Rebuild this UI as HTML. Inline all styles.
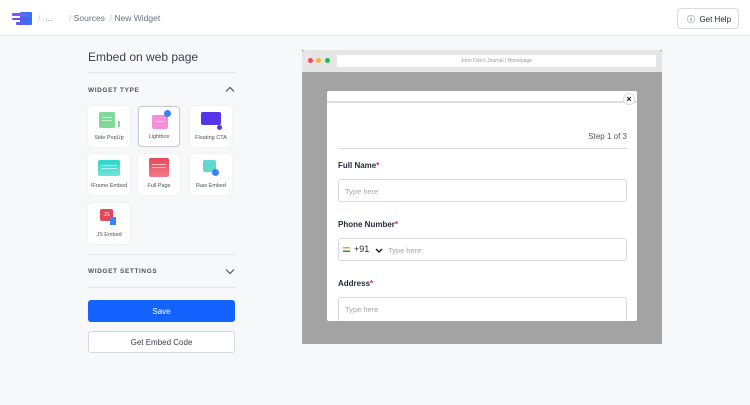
<!DOCTYPE html>
<html><head><style>
*{box-sizing:border-box;margin:0;padding:0}
body{width:750px;height:405px;background:#f7f8fa;font-family:"Liberation Sans",sans-serif;position:relative;overflow:hidden;color:#374151}
.a{position:absolute}
.hdr{left:0;top:0;width:750px;height:36px;background:#fff;border-bottom:1px solid #e8e9ec}
.bc{font-size:8.5px;color:#6b7280;top:13px}
.sl{color:#c4c7cc}
.card{width:42px;height:41px;background:#fff;border-radius:4px;box-shadow:0 0 2px rgba(0,0,0,.08);font-size:5.5px;color:#4b5563;text-align:center}
.card span{position:absolute;left:0;right:0;bottom:6px}
.ic{position:absolute;left:13px;top:6px;width:16px;height:16px;border-radius:2px}
.ic i{position:absolute;left:3px;right:3px;height:1px;background:rgba(255,255,255,.6)}
.hr{height:1px;background:#e3e5e8;left:88px;width:147px}
.sec{font-size:6.5px;font-weight:bold;letter-spacing:.6px;color:#4b5563}
.lab{font-size:8px;font-weight:bold;color:#1f2937;left:338px}
.lab b{color:#e11d48}
.inp{left:338px;width:289px;height:23px;border:1px solid #d7d9de;border-radius:3px;background:#fff;font-size:7.5px;color:#a5a8ae;padding:7px 0 0 6px}
</style></head><body>
<div class="a hdr"></div>
<div class="a" style="left:20px;top:12px;width:12px;height:13px;border-radius:1px;background:#3b6ff5"></div>
<div class="a" style="left:12px;top:13px;width:16px;height:2.5px;border-radius:1px;background:#7a5cf5"></div>
<div class="a" style="left:12px;top:17.5px;width:16px;height:2.5px;border-radius:1px;background:#6a4cf5"></div>
<div class="a" style="left:16px;top:22px;width:12px;height:2.5px;border-radius:1px;background:#5a5cf5"></div>
<div class="a bc" style="left:38px"><span class="sl">/</span>&nbsp;&nbsp;...</div>
<div class="a bc" style="left:69px"><span class="sl">/</span> Sources&nbsp;&nbsp;<span class="sl">/</span> New Widget</div>
<div class="a" style="left:677px;top:8px;width:62px;height:21px;border:1px solid #d8dadf;border-radius:4px;background:#fff;font-size:8px;color:#1f2937;padding:5px 0 0 9px">&#9432;&nbsp; Get Help</div>

<div class="a" style="left:88px;top:50px;font-size:12px;color:#374151">Embed on web page</div>
<div class="a hr" style="top:72px"></div>
<div class="a sec" style="left:88px;top:87px">WIDGET TYPE</div>
<svg class="a" style="left:225px;top:86px" width="10" height="7"><path d="M1 5.5L5 1.5L9 5.5" fill="none" stroke="#4b5563" stroke-width="1.2"/></svg>

<div class="a card" style="left:88px;top:106px"><div class="ic" style="background:#7ed99a;left:11px"><i style="top:5px"></i><i style="top:8px"></i></div><div class="a" style="left:30px;top:15px;width:2px;height:6px;background:#7ed99a"></div><span>Side PopUp</span></div>
<div class="a card" style="left:138px;top:106px;border:1px solid #c9ccd2"><div class="ic" style="background:#f48ed8;top:8px;height:14px"><i style="top:6px"></i></div><div class="a" style="left:25px;top:3px;width:7px;height:7px;border-radius:50%;background:#3b82f6"></div><span>Lightbox</span></div>
<div class="a card" style="left:190px;top:106px"><div class="ic" style="background:#5436e8;left:11px;width:20px;height:13px"></div><div class="a" style="left:27px;top:19px;width:5px;height:5px;border-radius:50%;background:#5436e8"></div><span>Floating CTA</span></div>
<div class="a card" style="left:88px;top:154px"><div class="ic" style="background:linear-gradient(#2fd4c6,#6fe5da);left:10px;width:22px"><i style="top:5px"></i><i style="top:8px"></i></div><span>IFrame Embed</span></div>
<div class="a card" style="left:138px;top:154px"><div class="ic" style="background:linear-gradient(#e5475a,#f37b8a);left:11px;width:20px;height:19px;top:4px"><i style="top:6px"></i><i style="top:9px"></i></div><span>Full Page</span></div>
<div class="a card" style="left:190px;top:154px"><div class="ic" style="background:#5fd8cf;left:13px;width:13px;height:12px"></div><div class="a" style="left:22px;top:15px;width:7px;height:7px;border-radius:50%;background:#3b82f6"></div><span>Raw Embed</span></div>
<div class="a card" style="left:88px;top:203px"><div class="ic" style="background:#e5475a;left:12px;width:13px;height:12px;font-size:5px;color:#fff;line-height:12px">JS</div><div class="a" style="left:22px;top:14px;width:6px;height:8px;background:#3b82f6"></div><span>JS Embed</span></div>

<div class="a hr" style="top:254px"></div>
<div class="a sec" style="left:88px;top:268px">WIDGET SETTINGS</div>
<svg class="a" style="left:225px;top:268px" width="10" height="7"><path d="M1 1.5L5 5.5L9 1.5" fill="none" stroke="#4b5563" stroke-width="1.2"/></svg>
<div class="a hr" style="top:287px"></div>
<div class="a" style="left:88px;top:300px;width:147px;height:22px;background:#1463ff;border-radius:3px;color:#fff;font-size:8px;text-align:center;padding-top:7px">Save</div>
<div class="a" style="left:88px;top:331px;width:147px;height:22px;background:#fff;border:1px solid #d7d9de;border-radius:3px;color:#374151;font-size:8px;text-align:center;padding-top:6px">Get Embed Code</div>

<div class="a" style="left:302px;top:50px;width:360px;height:294px;background:#a3a3a3"></div>
<div class="a" style="left:302px;top:50px;width:360px;height:22px;background:#e6e6e6;border-radius:3px 3px 0 0"></div>
<div class="a" style="left:308px;top:58px;width:5px;height:5px;border-radius:50%;background:#f04a5a"></div>
<div class="a" style="left:316px;top:58px;width:5px;height:5px;border-radius:50%;background:#f7b731"></div>
<div class="a" style="left:325px;top:58px;width:5px;height:5px;border-radius:50%;background:#20c04a"></div>
<div class="a" style="left:337px;top:55px;width:319px;height:12px;background:#fff;font-size:5px;color:#9a9a9a;text-align:center;padding-top:3px">John Doe's Journal | Homepage</div>

<div class="a" style="left:327px;top:91px;width:310px;height:230px;background:#fff;border-radius:2px"></div>
<div class="a" style="left:327px;top:101px;width:310px;height:2px;background:#dcdcea"></div>
<div class="a" style="left:623px;top:93px;width:12px;height:12px;border-radius:50%;background:#fff;border:1px solid #ddd;font-size:9px;font-weight:bold;color:#111;text-align:center;line-height:10px">×</div>
<div class="a" style="left:560px;top:132px;width:67px;text-align:right;font-size:8px;color:#4b5563">Step 1 of 3</div>
<div class="a" style="left:338px;top:148px;width:289px;height:1px;background:#d9dbe0"></div>
<div class="a lab" style="top:161px">Full Name<b>*</b></div>
<div class="a inp" style="top:179px">Type here</div>
<div class="a lab" style="top:220px">Phone Number<b>*</b></div>
<div class="a inp" style="top:238px;padding-left:0"><span style="position:absolute;left:4px;top:8px;width:7px;height:5px;background:linear-gradient(#f49a32 33%,#fff 33% 66%,#2a9a3a 66%)"></span><span style="position:absolute;left:15px;top:5px;font-size:9px;color:#1f2937">+91</span><svg style="position:absolute;left:36px;top:9px" width="8" height="5"><path d="M1 1L4 4L7 1" fill="none" stroke="#111" stroke-width="1.3"/></svg><span style="position:absolute;left:49px;top:7px">Type here</span></div>
<div class="a lab" style="top:279px">Address<b>*</b></div>
<div class="a" style="left:327px;top:297px;width:310px;height:24px;overflow:hidden"><div class="a inp" style="left:11px;top:0;height:30px">Type here</div></div>
</body></html>
